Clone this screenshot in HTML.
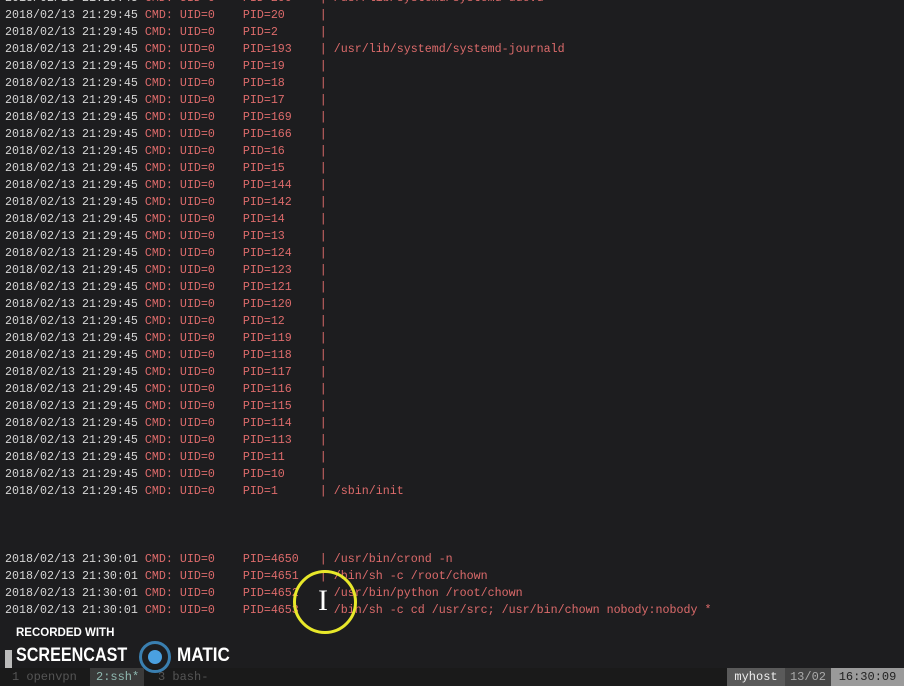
<!DOCTYPE html>
<html><head><style>
body{margin:0;width:904px;height:686px;background:#1d1d1f;overflow:hidden;position:relative;font-family:"Liberation Mono",monospace;font-size:11.67px;}
.l{position:absolute;left:5px;white-space:pre;color:#d6d6d6;line-height:17px;height:17px}
.r{color:#dd6b6b}
.bar{position:absolute;left:0;top:668px;width:904px;height:18px;background:#1a1a1a;}
.t{position:absolute;top:668px;height:18px;line-height:18px;white-space:pre;font-size:12px}
.sc{position:absolute;top:645px;color:#fff;font-family:'Liberation Sans',sans-serif;font-weight:bold;font-size:19px;transform-origin:left top}
</style></head><body>
<div class="l" style="top:-10px">2018/02/13 21:29:45 <span class="r">CMD: UID=0    PID=200    | /usr/lib/systemd/systemd-udevd</span></div>
<div class="l" style="top:7px">2018/02/13 21:29:45 <span class="r">CMD: UID=0    PID=20     |</span></div>
<div class="l" style="top:24px">2018/02/13 21:29:45 <span class="r">CMD: UID=0    PID=2      |</span></div>
<div class="l" style="top:41px">2018/02/13 21:29:45 <span class="r">CMD: UID=0    PID=193    | /usr/lib/systemd/systemd-journald</span></div>
<div class="l" style="top:58px">2018/02/13 21:29:45 <span class="r">CMD: UID=0    PID=19     |</span></div>
<div class="l" style="top:75px">2018/02/13 21:29:45 <span class="r">CMD: UID=0    PID=18     |</span></div>
<div class="l" style="top:92px">2018/02/13 21:29:45 <span class="r">CMD: UID=0    PID=17     |</span></div>
<div class="l" style="top:109px">2018/02/13 21:29:45 <span class="r">CMD: UID=0    PID=169    |</span></div>
<div class="l" style="top:126px">2018/02/13 21:29:45 <span class="r">CMD: UID=0    PID=166    |</span></div>
<div class="l" style="top:143px">2018/02/13 21:29:45 <span class="r">CMD: UID=0    PID=16     |</span></div>
<div class="l" style="top:160px">2018/02/13 21:29:45 <span class="r">CMD: UID=0    PID=15     |</span></div>
<div class="l" style="top:177px">2018/02/13 21:29:45 <span class="r">CMD: UID=0    PID=144    |</span></div>
<div class="l" style="top:194px">2018/02/13 21:29:45 <span class="r">CMD: UID=0    PID=142    |</span></div>
<div class="l" style="top:211px">2018/02/13 21:29:45 <span class="r">CMD: UID=0    PID=14     |</span></div>
<div class="l" style="top:228px">2018/02/13 21:29:45 <span class="r">CMD: UID=0    PID=13     |</span></div>
<div class="l" style="top:245px">2018/02/13 21:29:45 <span class="r">CMD: UID=0    PID=124    |</span></div>
<div class="l" style="top:262px">2018/02/13 21:29:45 <span class="r">CMD: UID=0    PID=123    |</span></div>
<div class="l" style="top:279px">2018/02/13 21:29:45 <span class="r">CMD: UID=0    PID=121    |</span></div>
<div class="l" style="top:296px">2018/02/13 21:29:45 <span class="r">CMD: UID=0    PID=120    |</span></div>
<div class="l" style="top:313px">2018/02/13 21:29:45 <span class="r">CMD: UID=0    PID=12     |</span></div>
<div class="l" style="top:330px">2018/02/13 21:29:45 <span class="r">CMD: UID=0    PID=119    |</span></div>
<div class="l" style="top:347px">2018/02/13 21:29:45 <span class="r">CMD: UID=0    PID=118    |</span></div>
<div class="l" style="top:364px">2018/02/13 21:29:45 <span class="r">CMD: UID=0    PID=117    |</span></div>
<div class="l" style="top:381px">2018/02/13 21:29:45 <span class="r">CMD: UID=0    PID=116    |</span></div>
<div class="l" style="top:398px">2018/02/13 21:29:45 <span class="r">CMD: UID=0    PID=115    |</span></div>
<div class="l" style="top:415px">2018/02/13 21:29:45 <span class="r">CMD: UID=0    PID=114    |</span></div>
<div class="l" style="top:432px">2018/02/13 21:29:45 <span class="r">CMD: UID=0    PID=113    |</span></div>
<div class="l" style="top:449px">2018/02/13 21:29:45 <span class="r">CMD: UID=0    PID=11     |</span></div>
<div class="l" style="top:466px">2018/02/13 21:29:45 <span class="r">CMD: UID=0    PID=10     |</span></div>
<div class="l" style="top:483px">2018/02/13 21:29:45 <span class="r">CMD: UID=0    PID=1      | /sbin/init</span></div>
<div class="l" style="top:551px">2018/02/13 21:30:01 <span class="r">CMD: UID=0    PID=4650   | /usr/bin/crond -n</span></div>
<div class="l" style="top:568px">2018/02/13 21:30:01 <span class="r">CMD: UID=0    PID=4651   | /bin/sh -c /root/chown</span></div>
<div class="l" style="top:585px">2018/02/13 21:30:01 <span class="r">CMD: UID=0    PID=4652     /usr/bin/python /root/chown</span></div>
<div class="l" style="top:602px">2018/02/13 21:30:01 <span class="r">CMD: UID=0    PID=4653     /bin/sh -c cd /usr/src; /usr/bin/chown nobody:nobody *</span></div>
<div style="position:absolute;left:293px;top:570px;width:64px;height:64px;border:3px solid #e8e82a;border-radius:50%;box-sizing:border-box"></div>
<div style="position:absolute;left:318px;top:584px;color:#fff;font-family:'Liberation Serif',serif;font-size:30px;line-height:34px">I</div>
<div class="bar"></div>
<div style="position:absolute;left:16px;top:627px;color:#fff;font-family:'Liberation Sans',sans-serif;font-weight:bold;font-size:11.5px">RECORDED WITH</div>
<div style="position:absolute;left:5px;top:650px;width:7px;height:18px;background:#bbb"></div>
<div class="sc" style="left:16px;transform:scaleX(0.85)">SCREENCAST</div>
<div style="position:absolute;left:139px;top:641px;width:32px;height:32px;border:3px solid #3a7fb0;border-radius:50%;box-sizing:border-box"></div>
<div style="position:absolute;left:148px;top:650px;width:14px;height:14px;background:#4aa0e0;border-radius:50%"></div>
<div class="sc" style="left:177px;transform:scaleX(0.9)">MATIC</div>
<div class="t" style="left:12px;color:#555">1 openvpn</div>
<div class="t" style="left:90px;width:54px;background:#3a3a3a;color:#8fb8b0;padding-left:6px;box-sizing:border-box">2:ssh*</div>
<div class="t" style="left:158px;color:#555">3 bash-</div>
<div class="t" style="left:727px;width:58px;background:#5a5a5a;color:#eee;text-align:center">myhost</div>
<div class="t" style="left:785px;width:46px;background:#454545;color:#aaa;text-align:center">13/02</div>
<div class="t" style="left:831px;width:73px;background:#9a9a9a;color:#222;text-align:center">16:30:09</div>
</body></html>
